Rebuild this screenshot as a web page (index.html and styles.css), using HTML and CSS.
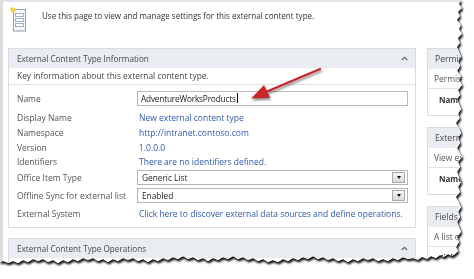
FILE: index.html
```html
<!DOCTYPE html>
<html>
<head>
<meta charset="utf-8">
<link rel="stylesheet" href="styles.css">
</head>
<body>
<div class="page">
  <div class="tear">
    <div class="sheet">
      <div class="intro">
        <svg class="page-icon" width="17" height="25" viewBox="0 0 17 25">
          <rect x="3.5" y="2.5" width="12" height="21.5" fill="#f5f7fb" stroke="#8e9db8"/>
          <rect x="5.5" y="6.5" width="8" height="3" fill="#fff" stroke="#9fb0c9"/>
          <rect x="5.5" y="11.5" width="8" height="3" fill="#fff" stroke="#9fb0c9"/>
          <rect x="5.5" y="16.5" width="8" height="3" fill="#fff" stroke="#9fb0c9"/>
          <path d="M3 0v6M0 3h6M1 1l4 4M5 1l-4 4" stroke="#f1d43a" stroke-width="1.1"/>
        </svg>
        <p class="intro-text">Use this page to view and manage settings for this external content type.</p>
      </div>
      <div class="columns">
        <div class="main-col">
          <section class="panel">
            <header class="panel-head">
              <span>External Content Type Information</span>
              <svg class="caret" width="7" height="5" viewBox="0 0 7 5"><path d="M0.8 4L3.5 1.3L6.2 4" fill="none" stroke="#6a6a6a" stroke-width="1.2"/></svg>
            </header>
            <div class="panel-desc">Key information about this external content type.</div>
            <div class="fields">
              <div class="label">Name</div>
              <div class="textbox">AdventureWorksProducts<span class="cursor"></span></div>
              <div class="label">Display Name</div>
              <div class="value link">New external content type</div>
              <div class="label">Namespace</div>
              <div class="value link">http://intranet.contoso.com</div>
              <div class="label">Version</div>
              <div class="value link">1.0.0.0</div>
              <div class="label">Identifiers</div>
              <div class="value link">There are no identifiers defined.</div>
              <div class="label">Office Item Type</div>
              <div class="select"><span>Generic List</span><span class="select-btn"><span class="tri"></span></span></div>
              <div class="label">Offline Sync for external list</div>
              <div class="select"><span>Enabled</span><span class="select-btn"><span class="tri"></span></span></div>
              <div class="label">External System</div>
              <div class="value link">Click here to discover external data sources and define operations.</div>
            </div>
          </section>
          <section class="panel">
            <header class="panel-head">
              <span>External Content Type Operations</span>
              <svg class="caret" width="7" height="5" viewBox="0 0 7 5"><path d="M0.8 4L3.5 1.3L6.2 4" fill="none" stroke="#6a6a6a" stroke-width="1.2"/></svg>
            </header>
            <div class="panel-fill"></div>
          </section>
        </div>
        <div class="side-col">
          <section class="panel">
            <header class="panel-head side-head">Permissions</header>
            <div class="side-desc">Permissions for this external content type.</div>
            <div class="side-cols">Name</div>
          </section>
          <section class="panel">
            <header class="panel-head side-head">External Lists</header>
            <div class="side-desc">View external lists bound to this external content type.</div>
            <div class="side-cols">Name</div>
          </section>
          <section class="panel">
            <header class="panel-head side-head">Fields</header>
            <div class="side-desc">A list of the fields that were defined in the operations.</div>
            <div class="side-cols">Field Name</div>
          </section>
        </div>
      </div>
    </div>
  </div>
  <svg class="arrow" width="474" height="279" viewBox="0 0 474 279">
    <line x1="320" y1="69" x2="267" y2="91.5" stroke="#c8262a" stroke-width="2.2" stroke-linecap="round"/>
    <polygon points="251,98.5 264,85 270,97.8" fill="#c8262a"/>
  </svg>
</div>
</body>
</html>
```

FILE: styles.css
```css
html, body {
  margin: 0;
  padding: 0;
  background: #ffffff;
}

.page {
  position: relative;
  width: 474px;
  height: 279px;
  overflow: hidden;
  font-family: "Open Sans", "Noto Sans", sans-serif;
  color: #444;
}

.tear {
  width: 466px;
  height: 268px;
  filter: drop-shadow(1.5px 2px 1px rgba(0, 0, 0, 0.85)) drop-shadow(0.5px 0.5px 0.6px rgba(0, 0, 0, 0.6));
}

.sheet {
  box-sizing: border-box;
  width: 466px;
  height: 268px;
  background: #fff;
  border-top: 2px solid #e3e3e3;
  border-left: 3px solid #dedede;
  padding-left: 5px;
  overflow: hidden;
  clip-path: polygon(0 0, 461px 0, 459px 4px, 462px 8px, 458px 12px, 460px 16px, 457px 20px, 461px 25px, 459px 29px, 462px 34px, 458px 38px, 460px 43px, 457px 47px, 459px 52px, 461px 57px, 458px 61px, 460px 66px, 457px 71px, 461px 76px, 459px 80px, 462px 85px, 458px 90px, 460px 95px, 457px 99px, 459px 104px, 461px 109px, 458px 114px, 460px 118px, 456px 123px, 459px 128px, 461px 133px, 458px 138px, 460px 143px, 457px 148px, 459px 152px, 462px 157px, 458px 162px, 460px 167px, 457px 172px, 459px 177px, 461px 182px, 458px 187px, 460px 192px, 456px 197px, 459px 202px, 461px 207px, 458px 212px, 460px 217px, 457px 222px, 459px 227px, 461px 232px, 457px 237px, 459px 242px, 456px 247px, 458px 251px, 455px 254px, 452px 256px, 448px 254px, 444px 257px, 440px 255px, 436px 258px, 431px 256px, 427px 259px, 422px 257px, 418px 260px, 413px 258px, 408px 259px, 403px 257px, 398px 260px, 393px 258px, 388px 261px, 383px 259px, 378px 261px, 373px 258px, 368px 260px, 363px 258px, 358px 261px, 353px 259px, 348px 262px, 343px 259px, 338px 261px, 333px 258px, 328px 260px, 323px 257px, 318px 259px, 313px 256px, 308px 259px, 303px 257px, 298px 260px, 293px 258px, 288px 261px, 283px 259px, 278px 262px, 273px 260px, 268px 262px, 263px 259px, 258px 261px, 253px 258px, 248px 260px, 243px 257px, 238px 259px, 233px 256px, 228px 259px, 223px 257px, 218px 260px, 213px 258px, 208px 261px, 203px 258px, 198px 260px, 193px 257px, 188px 259px, 183px 256px, 178px 259px, 173px 257px, 168px 260px, 163px 258px, 158px 261px, 153px 259px, 148px 262px, 143px 259px, 138px 261px, 133px 258px, 128px 260px, 123px 258px, 118px 261px, 113px 259px, 108px 262px, 103px 259px, 98px 261px, 93px 258px, 88px 260px, 83px 258px, 78px 261px, 73px 259px, 68px 262px, 63px 260px, 58px 263px, 53px 260px, 48px 262px, 43px 259px, 38px 261px, 33px 259px, 28px 262px, 23px 260px, 18px 263px, 13px 261px, 8px 263px, 3px 261px, 0 262px);
}

.intro {
  display: flex;
  align-items: flex-start;
  height: 46px;
}

.page-icon {
  flex: none;
  margin: 5px 0 0 2px;
}

.intro-text {
  margin: 8px 0 0 15px;
  font-size: 8.05px;
  line-height: 12px;
  color: #333;
  white-space: nowrap;
}

.columns {
  display: flex;
  gap: 11px;
}

.main-col {
  flex: none;
  width: 408px;
  display: flex;
  flex-direction: column;
  gap: 10px;
}

.side-col {
  flex: none;
  width: 140px;
  display: flex;
  flex-direction: column;
  gap: 11px;
}

.panel {
  border: 1px solid #d9dcdf;
  background: #fff;
}

.panel-head {
  height: 19px;
  background: #e9ecf0;
  display: flex;
  align-items: center;
  justify-content: space-between;
  padding: 0 7px 0 8px;
  font-size: 8.2px;
  color: #4a4a4a;
  white-space: nowrap;
}

.caret {
  flex: none;
}

.panel-desc {
  height: 16px;
  line-height: 16px;
  border-bottom: 1px solid #e1e1e1;
  padding-left: 8px;
  font-size: 8.4px;
  color: #444;
}

.fields {
  display: grid;
  grid-template-columns: 120px 271px;
  grid-template-rows: 22px 16px 15px 14.5px 14.5px 16px 20px 16px;
  align-items: center;
  padding: 2px 7px 6px 8px;
  font-size: 8.5px;
}

.label {
  color: #555;
  white-space: nowrap;
}

.value {
  padding-left: 2px;
  white-space: nowrap;
}

.link {
  color: #2f5aa8;
}

.textbox {
  box-sizing: border-box;
  height: 15px;
  border: 1px solid #b9b9b9;
  padding-left: 3px;
  display: flex;
  align-items: center;
  font-size: 8.3px;
  letter-spacing: -0.2px;
  color: #222;
}

.cursor {
  width: 1px;
  height: 10px;
  background: #111;
  margin-left: 1px;
}

.select {
  box-sizing: border-box;
  height: 15px;
  border: 1px solid #b5b5b5;
  padding-left: 4px;
  display: flex;
  align-items: center;
  justify-content: space-between;
  font-size: 8.3px;
  color: #222;
}

.select-btn {
  box-sizing: border-box;
  width: 13px;
  height: 11px;
  margin-right: 2px;
  border: 1px solid #a8a8a8;
  background: linear-gradient(#f6f6f6, #d9d9d9);
  display: flex;
  align-items: center;
  justify-content: center;
}

.tri {
  width: 0;
  height: 0;
  border-left: 2.5px solid transparent;
  border-right: 2.5px solid transparent;
  border-top: 3px solid #111;
}

.panel-fill {
  height: 30px;
}

.side-head {
  height: 20px;
  padding-left: 7px;
  justify-content: flex-start;
  font-size: 8.6px;
}

.side-desc {
  height: 19px;
  line-height: 19px;
  border-bottom: 1px solid #e1e1e1;
  padding-left: 6px;
  font-size: 8.4px;
  color: #555;
  white-space: nowrap;
}

.side-cols {
  height: 26px;
  line-height: 22px;
  padding-left: 11px;
  font-size: 8px;
  font-weight: 700;
  color: #333;
  white-space: nowrap;
}

.arrow {
  position: absolute;
  left: 0;
  top: 0;
  pointer-events: none;
  filter: drop-shadow(1px 2px 1px rgba(0, 0, 0, 0.45));
}
```
